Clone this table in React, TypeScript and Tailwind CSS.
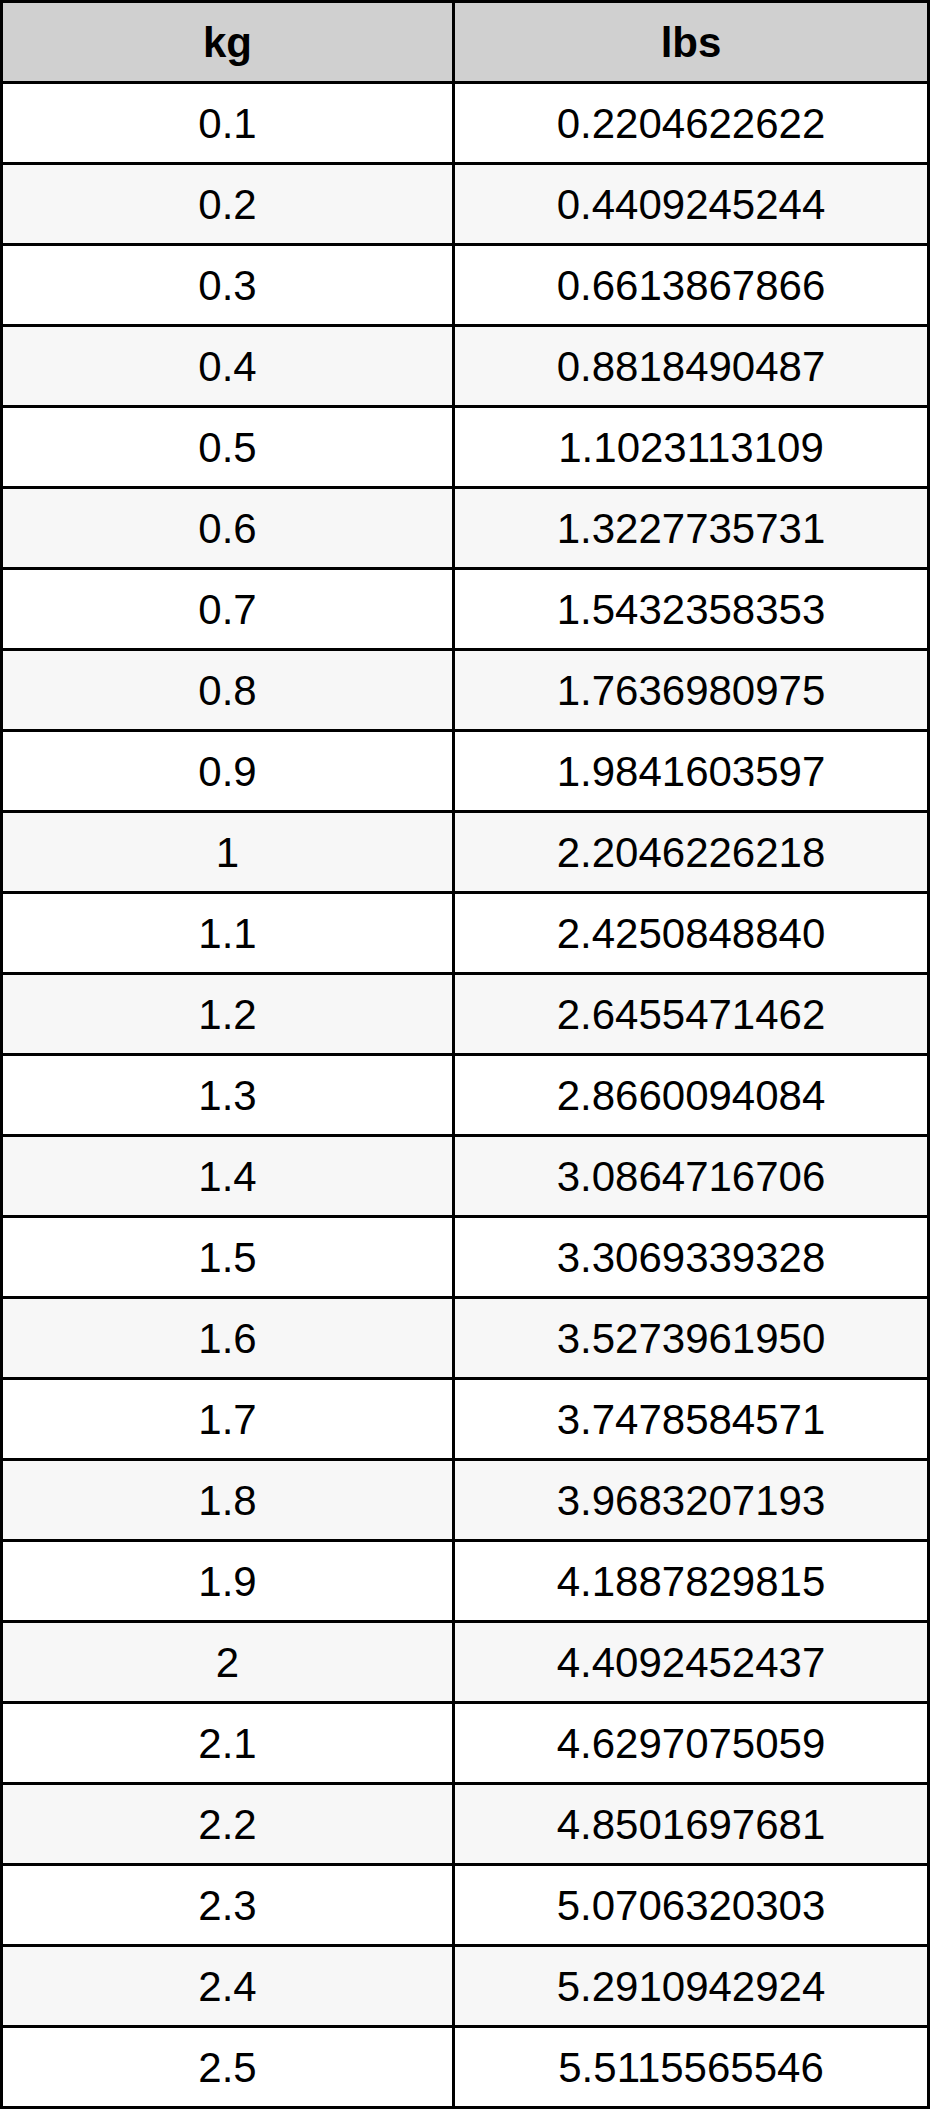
const rows: [string, string][] = [
  ["0.1", "0.2204622622"],
  ["0.2", "0.4409245244"],
  ["0.3", "0.6613867866"],
  ["0.4", "0.8818490487"],
  ["0.5", "1.1023113109"],
  ["0.6", "1.3227735731"],
  ["0.7", "1.5432358353"],
  ["0.8", "1.7636980975"],
  ["0.9", "1.9841603597"],
  ["1", "2.2046226218"],
  ["1.1", "2.4250848840"],
  ["1.2", "2.6455471462"],
  ["1.3", "2.8660094084"],
  ["1.4", "3.0864716706"],
  ["1.5", "3.3069339328"],
  ["1.6", "3.5273961950"],
  ["1.7", "3.7478584571"],
  ["1.8", "3.9683207193"],
  ["1.9", "4.1887829815"],
  ["2", "4.4092452437"],
  ["2.1", "4.6297075059"],
  ["2.2", "4.8501697681"],
  ["2.3", "5.0706320303"],
  ["2.4", "5.2910942924"],
  ["2.5", "5.5115565546"],
];

export default function App() {
  return (
    <div className="w-[930px] bg-white font-['Liberation_Sans',Arial,sans-serif] text-black">
      <div className="border-[3px] border-black">
        {/* header */}
        <div className="grid grid-cols-[449px_1fr] h-[78px] bg-[#d0d0d0] text-[42px] font-bold">
          <div className="flex items-center justify-center">kg</div>
          <div className="flex items-center justify-center border-l-[3px] border-black">lbs</div>
        </div>

        {rows.map(([kg, lbs], i) => (
          <div
            key={kg}
            className={
              "grid grid-cols-[449px_1fr] h-[81px] border-t-[3px] border-black text-[42px] " +
              (i % 2 === 1 ? "bg-[#f7f7f7]" : "bg-white")
            }
          >
            <div className="flex items-center justify-center">{kg}</div>
            <div className="flex items-center justify-center border-l-[3px] border-black">{lbs}</div>
          </div>
        ))}
      </div>
    </div>
  );
}
